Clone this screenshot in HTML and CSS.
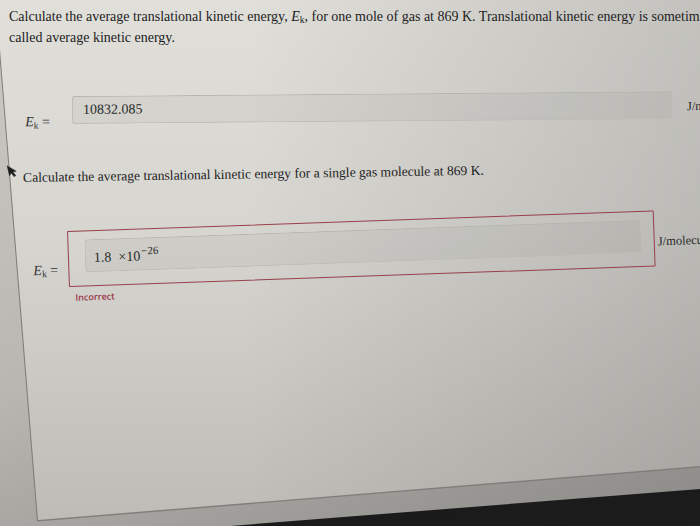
FILE: index.html
```html
<!DOCTYPE html>
<html>
<head>
<meta charset="utf-8">
<link rel="stylesheet" href="styles.css">
</head>
<body>
<div class="screen">
  <div class="layer bezel"></div>
  <div class="layer monitor"></div>
  <div class="layer panel-edge"></div>
  <div class="layer panel"></div>
  <div class="layer content">
    <p class="q1">Calculate the average translational kinetic energy, <i>E</i><sub>k</sub>, for one mole of gas at 869 K. Translational kinetic energy is sometimes<br>called average kinetic energy.</p>

    <div class="answer a1">
      <span class="label"><i>E</i><sub>k</sub> =</span>
      <div class="field">10832.085</div>
      <span class="unit">J/mol</span>
    </div>

    <div class="prompt2">
      <svg class="cursor" width="9" height="14" viewBox="0 0 9 14"><path d="M0.5 0.5 L0.5 11 L3 8.6 L5 12.8 L6.8 12 L4.9 7.9 L8.2 7.9 Z" fill="#1c1c1c" stroke="#3a3a3a" stroke-width="0.6"/></svg>
      <p>Calculate the average translational kinetic energy for a single gas molecule at 869 K.</p>
    </div>

    <div class="answer a2">
      <span class="label"><i>E</i><sub>k</sub> =</span>
      <div class="check">
        <div class="box">
          <div class="field">1.8 &nbsp;×10<sup>−26</sup></div>
        </div>
        <div class="feedback">Incorrect</div>
      </div>
      <span class="unit">J/molecule</span>
    </div>
  </div>
</div>
</body>
</html>
```

FILE: styles.css
```css
html, body {
  margin: 0;
  padding: 0;
}
body {
  width: 700px;
  height: 526px;
  overflow: hidden;
  background: #151515;
}
.screen {
  display: grid;
  width: 700px;
  height: 526px;
  overflow: hidden;
}
.layer {
  grid-area: 1 / 1;
  width: 700px;
  height: 526px;
}
.bezel {
  background: linear-gradient(170deg, #0e0e0e 0%, #1c1c1c 100%);
}
.monitor {
  clip-path: polygon(0 0, 700px 0, 700px 489px, 230px 526px, 0 526px);
  background: linear-gradient(160deg, #cbcac5 0%, #b9b7b2 50%, #8b8986 100%);
}
.panel-edge {
  clip-path: polygon(-5px 0, 700px 0, 700px 467.5px, 37px 521.5px);
  background: #807e7a;
}
.panel {
  clip-path: polygon(-4px 0, 700px 0, 700px 466px, 38px 520px);
  background:
    linear-gradient(to right, rgba(0,0,0,0) 35%, rgba(0,0,0,0.13) 100%),
    linear-gradient(to bottom, #e0dfda 0%, #d6d5d0 45%, #bdbbb6 100%);
}
.content {
  transform: translate(0, 0);
  font-family: "Liberation Serif", "Times New Roman", serif;
  color: #222;
  overflow: hidden;
}
i {
  font-style: italic;
}
sub {
  font-size: 0.68em;
  vertical-align: -0.25em;
  line-height: 0;
}
.q1 {
  margin: 0;
  padding: 6px 0 0 9px;
  font-size: 14px;
  line-height: 21px;
  white-space: nowrap;
}
.answer {
  display: flex;
  white-space: nowrap;
}
.answer > * {
  flex: none;
}
.label {
  font-size: 14px;
  line-height: 16px;
  align-self: flex-end;
  color: #333;
}
.field {
  box-sizing: border-box;
  border: 1px solid #bdbcb6;
  border-top-color: #b5b4ae;
  border-radius: 3px;
  background: rgba(0,0,0,0.035);
  font-size: 14px;
  color: #2a2a2a;
}
.unit {
  font-size: 12.5px;
  color: #2a2a2a;
}
.a1 {
  margin-top: 48px;
  padding-left: 25px;
  transform: rotate(-0.45deg);
  transform-origin: 72px 50%;
}
.a1 .label {
  width: 47px;
  margin-bottom: -6px;
}
.a1 .field {
  width: 600px;
  height: 28px;
  padding: 4px 0 0 10px;
  line-height: 18px;
}
.a1 .unit {
  margin-left: 15px;
  align-self: center;
  padding-top: 2px;
}
.prompt2 {
  display: flex;
  align-items: flex-start;
  margin-top: 45px;
  padding-left: 8px;
  transform: rotate(-0.9deg);
  transform-origin: 23px 50%;
}
.cursor {
  flex: none;
  margin-top: -5px;
  transform: rotate(-12deg);
}
.prompt2 p {
  margin: 0 0 0 6px;
  font-size: 13.6px;
  line-height: 18px;
  white-space: nowrap;
}
.a2 {
  margin-top: 44px;
  padding-left: 33px;
  transform: rotate(-2deg);
  transform-origin: 68px 28px;
}
.a2 .label {
  width: 35px;
  margin-bottom: 26px;
}
.check {
  display: flex;
  flex-direction: column;
}
.box {
  box-sizing: border-box;
  width: 587px;
  height: 56px;
  border: 1.5px solid #9a3f4b;
  border-radius: 1px;
  padding: 8px 12px 0 16px;
}
.a2 .field {
  width: 557px;
  height: 33px;
  padding: 9px 0 0 8px;
  line-height: 18px;
}
.a2 sup {
  font-size: 0.78em;
  vertical-align: 0.55em;
  line-height: 0;
  margin-left: 1px;
}
.feedback {
  font-family: "Open Sans", "Liberation Sans", sans-serif;
  font-size: 9px;
  font-weight: 600;
  color: #9a3448;
  margin: 5px 0 0 6px;
  line-height: 12px;
}
.a2 .unit {
  margin-left: 3px;
  margin-top: 24px;
}
```
